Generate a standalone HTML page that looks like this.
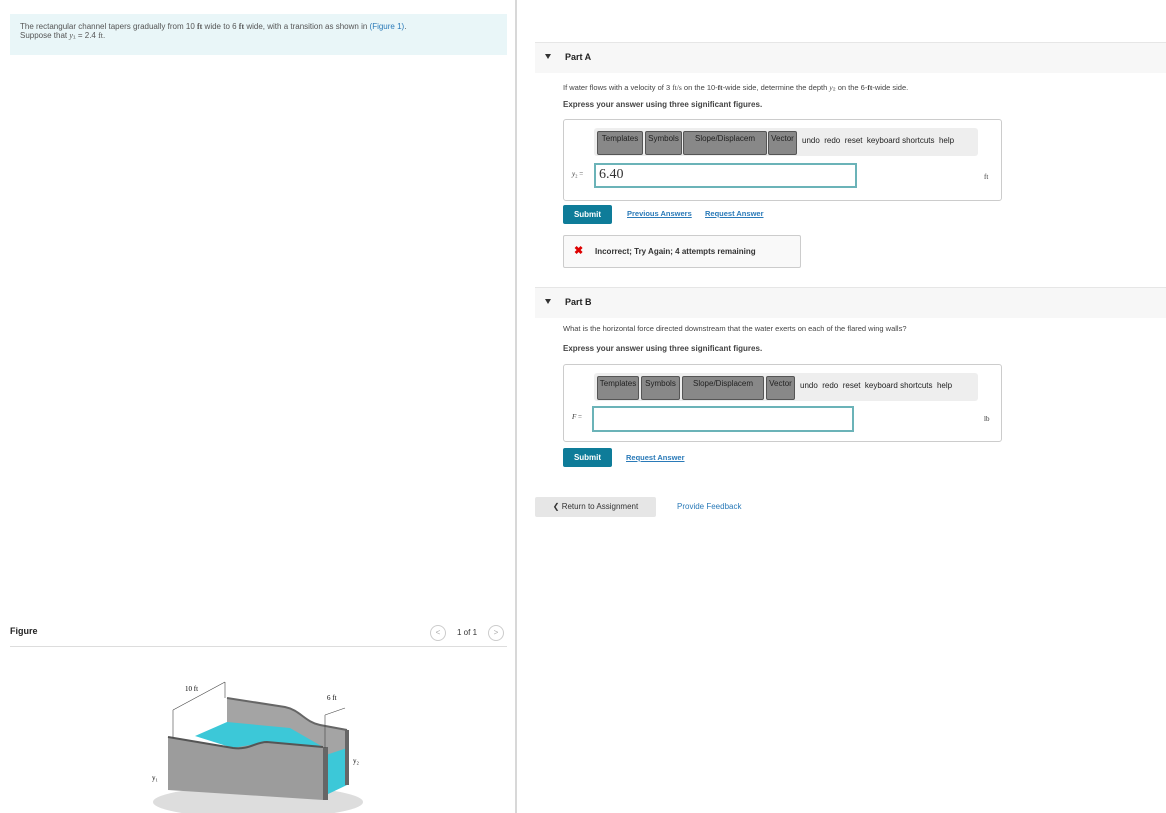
<!DOCTYPE html>
<html><head><meta charset="utf-8"><style>
body{margin:0;width:1166px;height:813px;position:relative;overflow:hidden;background:#fff;font-family:"Liberation Sans",Arial,sans-serif;color:#333}
.a{position:absolute}
.s{font-size:8px}
.bar{position:absolute;left:535px;width:631px;height:30px;background:#f7f7f7;border-top:1px solid #e6e6e6}
.bar span{position:absolute;left:30px;top:9px;font-size:9px;font-weight:bold;color:#222}
.bar i{position:absolute;left:10px;top:11px;width:0;height:0;border-left:3px solid transparent;border-right:3px solid transparent;border-top:5px solid #333}
.box{position:absolute;left:563px;width:437px;border:1px solid #ccc;border-radius:3px;background:#fff}
.tb{position:absolute;left:30px;height:28px;width:384px;background:#eee;border-radius:3px}
.btn{position:absolute;top:3px;height:22px;background:#888;border:1px solid #555;border-radius:2px;font-size:8px;color:#222;line-height:14px;text-align:center;overflow:hidden}
.tl{position:absolute;top:8px;font-size:8px;color:#222}
.inp{position:absolute;left:30px;border:2px solid #6bb3b8;background:#fff}
.sub{position:absolute;left:563px;width:49px;height:19px;background:#0e7c99;color:#fff;font-size:8px;font-weight:bold;line-height:19px;text-align:center;border-radius:2px}
.lk{position:absolute;font-size:7.5px;color:#2a7ab8;text-decoration:underline;font-weight:bold}
</style></head><body>
<div class="a" style="left:10px;top:14px;width:497px;height:41px;background:#e9f6f8"></div>
<div class="a s" style="left:20px;top:22px;color:#555;line-height:9px">The rectangular channel tapers gradually from 10 <b style="font-family:'Liberation Serif'">ft</b> wide to 6 <b style="font-family:'Liberation Serif'">ft</b> wide, with a transition as shown in <span style="color:#2a7ab8">(Figure 1)</span>.<br>Suppose that <i style="font-family:'Liberation Serif'">y</i>₁ = 2.4 <span style="font-family:'Liberation Serif'">ft</span>.</div>
<div class="a" style="left:515px;top:0;width:2px;height:813px;background:#d8d8d8"></div>

<div class="a" style="left:10px;top:626px;font-size:9px;font-weight:bold;color:#222">Figure</div>
<div class="a" style="left:10px;top:646px;width:497px;height:1px;background:#ddd"></div>
<div class="a" style="left:430px;top:625px;width:14px;height:14px;border:1px solid #ccc;border-radius:50%;font-size:8px;text-align:center;line-height:14px;color:#aaa">&lt;</div>
<div class="a s" style="left:457px;top:628px">1 of 1</div>
<div class="a" style="left:488px;top:625px;width:14px;height:14px;border:1px solid #ccc;border-radius:50%;font-size:8px;text-align:center;line-height:14px;color:#aaa">&gt;</div>
<svg class="a" style="left:140px;top:670px" width="240" height="143">
<ellipse cx="118" cy="132" rx="105" ry="16" fill="#ddd"/>
<path d="M87,28 L145,37 C160,40 165,52 180,55 L207,60 L207,113 L87,90 Z" fill="#a4a4a4"/>
<path d="M87,28 L145,37 C160,40 165,52 180,55 L207,60" fill="none" stroke="#666" stroke-width="2"/>
<polygon points="55,66 87,52 150,58 183,77 127,72 93,78" fill="#3cc8d8"/>
<polygon points="186,85 207,78 207,115 186,125" fill="#3cc8d8"/>
<path d="M28,67 L93,78 C110,80 115,72 127,72 L183,77 L183,130 L28,120 Z" fill="#9c9c9c"/>
<path d="M28,67 L93,78 C110,80 115,72 127,72 L183,77" fill="none" stroke="#555" stroke-width="2"/>
<rect x="183" y="77" width="5" height="53" fill="#666"/>
<rect x="205" y="60" width="4" height="55" fill="#666"/>
<line x1="33" y1="40" x2="85" y2="12" stroke="#444" stroke-width="0.6"/>
<line x1="33" y1="40" x2="33" y2="68" stroke="#444" stroke-width="0.6"/>
<line x1="85" y1="12" x2="85" y2="28" stroke="#444" stroke-width="0.6"/>
<line x1="185" y1="45" x2="205" y2="38" stroke="#444" stroke-width="0.6"/>
<line x1="185" y1="45" x2="185" y2="78" stroke="#444" stroke-width="0.6"/>
<text x="45" y="21" font-size="7" font-family="Liberation Serif">10 ft</text>
<text x="187" y="30" font-size="7" font-family="Liberation Serif">6 ft</text>
<text x="12" y="110" font-size="7" font-family="Liberation Serif">y₁</text>
<text x="213" y="93" font-size="7" font-family="Liberation Serif">y₂</text>
</svg>

<div class="bar" style="top:42px"><i></i><span>Part A</span></div>
<div class="a" style="left:563px;top:83px;font-size:7.5px;color:#444">If water flows with a velocity of 3 <span style="font-family:'Liberation Serif'">ft/s</span> on the 10-<b style="font-family:'Liberation Serif'">ft</b>-wide side, determine the depth <i style="font-family:'Liberation Serif'">y</i>₂ on the 6-<b style="font-family:'Liberation Serif'">ft</b>-wide side.</div>
<div class="a" style="left:563px;top:100px;font-size:8px;font-weight:bold;color:#444">Express your answer using three significant figures.</div>
<div class="box" style="top:119px;height:80px">
 <div class="tb" style="top:8px">
  <div class="btn" style="left:3px;width:44px">Templates</div>
  <div class="btn" style="left:51px;width:35px">Symbols</div>
  <div class="btn" style="left:89px;width:82px">Slope/Displacem</div>
  <div class="btn" style="left:174px;width:27px">Vector</div>
  <div class="tl" style="left:208px">undo &nbsp;redo &nbsp;reset &nbsp;keyboard shortcuts &nbsp;help</div>
 </div>
 <div class="a" style="left:8px;top:50px;font-size:7px;font-family:'Liberation Serif'"><i>y</i>₂ =</div>
 <div class="inp" style="top:43px;width:259px;height:21px"><span style="position:absolute;left:3px;top:2px;font-family:'Liberation Serif';font-size:14px;color:#333">6.40</span></div>
 <div class="a" style="left:420px;top:53px;font-size:7px;font-family:'Liberation Serif'">ft</div>
</div>
<div class="sub" style="top:205px">Submit</div>
<div class="lk" style="left:627px;top:209px">Previous Answers</div>
<div class="lk" style="left:705px;top:209px">Request Answer</div>
<div class="a" style="left:563px;top:235px;width:236px;height:31px;border:1px solid #ccc;border-radius:2px;background:#f9f9f9"><span style="position:absolute;left:10px;top:8px;color:#d00;font-weight:bold;font-size:11px">✖</span><span style="position:absolute;left:31px;top:11px;font-size:8px;font-weight:bold;color:#333">Incorrect; Try Again; 4 attempts remaining</span></div>

<div class="bar" style="top:287px"><i></i><span>Part B</span></div>
<div class="a" style="left:563px;top:324px;font-size:7.5px;color:#444">What is the horizontal force directed downstream that the water exerts on each of the flared wing walls?</div>
<div class="a" style="left:563px;top:344px;font-size:8px;font-weight:bold;color:#444">Express your answer using three significant figures.</div>
<div class="box" style="top:364px;height:76px">
 <div class="tb" style="top:8px;left:30px">
  <div class="btn" style="left:3px;width:40px">Templates</div>
  <div class="btn" style="left:47px;width:37px">Symbols</div>
  <div class="btn" style="left:88px;width:80px">Slope/Displacem</div>
  <div class="btn" style="left:172px;width:27px">Vector</div>
  <div class="tl" style="left:206px">undo &nbsp;redo &nbsp;reset &nbsp;keyboard shortcuts &nbsp;help</div>
 </div>
 <div class="a" style="left:8px;top:48px;font-size:7px;font-family:'Liberation Serif'"><i>F</i> =</div>
 <div class="inp" style="top:41px;left:28px;width:258px;height:22px"></div>
 <div class="a" style="left:420px;top:50px;font-size:7px;font-family:'Liberation Serif'">lb</div>
</div>
<div class="sub" style="top:448px">Submit</div>
<div class="lk" style="left:626px;top:453px">Request Answer</div>

<div class="a" style="left:535px;top:497px;width:121px;height:20px;background:#e6e6e6;border-radius:2px;font-size:8px;line-height:20px;text-align:center;color:#333">❮ Return to Assignment</div>
<div class="a" style="left:677px;top:502px;font-size:8px;color:#2a7ab8">Provide Feedback</div>
</body></html>
